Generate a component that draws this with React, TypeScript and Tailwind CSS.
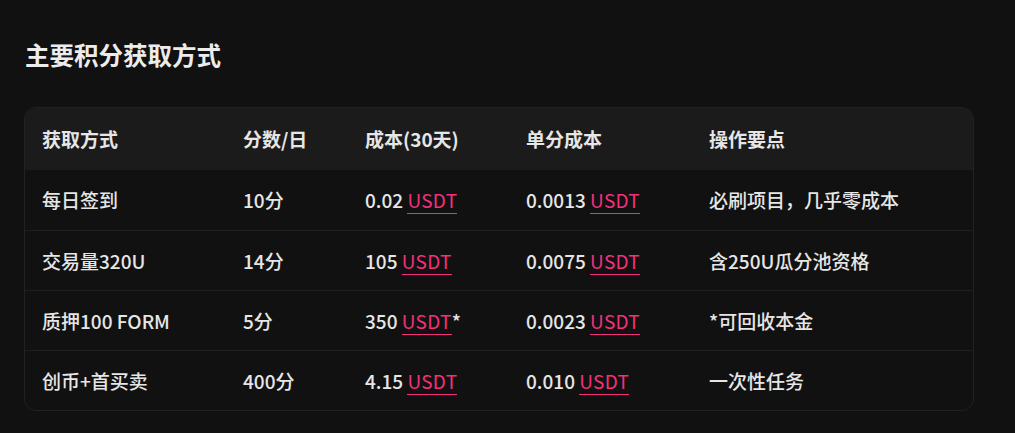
import React from "react";

type Row = {
  method: string;
  points: string;
  cost: string;
  costStar?: boolean;
  unit: string;
  note: string;
};

const rows: Row[] = [
  { method: "每日签到", points: "10分", cost: "0.02", unit: "0.0013", note: "必刷项目，几乎零成本" },
  { method: "交易量320U", points: "14分", cost: "105", unit: "0.0075", note: "含250U瓜分池资格" },
  { method: "质押100 FORM", points: "5分", cost: "350", costStar: true, unit: "0.0023", note: "*可回收本金" },
  { method: "创币+首买卖", points: "400分", cost: "4.15", unit: "0.010", note: "一次性任务" },
];

const cols = "grid grid-cols-[201px_122px_161px_183px_1fr] items-center";

function Usdt() {
  return (
    <span className="inline-block border-b border-[#f4307c] align-top font-normal leading-[27px] tracking-[0.3px] text-[#f4307c]">
      USDT
    </span>
  );
}

export default function App() {
  return (
    <div
      className="min-h-[433px] w-full bg-[#111111] pl-6 pt-[37px] text-[#e6e6e6]"
      style={{ fontFamily: '"Noto Sans CJK SC", "Noto Sans", sans-serif' }}
    >
      <h2 className="pl-px text-[24.5px] font-bold leading-9 text-[#ececec]">主要积分获取方式</h2>

      <div className="mt-[34px] w-[950px] overflow-hidden rounded-xl border border-[#222222] bg-[#111111]">
        <div className={`${cols} h-[62px] bg-[#1b1b1b] pl-[17px] text-[19px] font-bold`}>
          <div>获取方式</div>
          <div>分数/日</div>
          <div>成本(30天)</div>
          <div>单分成本</div>
          <div>操作要点</div>
        </div>
        {rows.map((r, i) => (
          <div
            key={r.method}
            className={`${cols} h-[60px] pl-[17px] text-[19px] leading-7 font-medium ${i > 0 ? "border-t border-[#1f1f1f]" : ""}`}
          >
            <div>{r.method}</div>
            <div>{r.points}</div>
            <div>
              {r.cost} <Usdt />
              {r.costStar && "*"}
            </div>
            <div>
              {r.unit} <Usdt />
            </div>
            <div>{r.note}</div>
          </div>
        ))}
      </div>
    </div>
  );
}
